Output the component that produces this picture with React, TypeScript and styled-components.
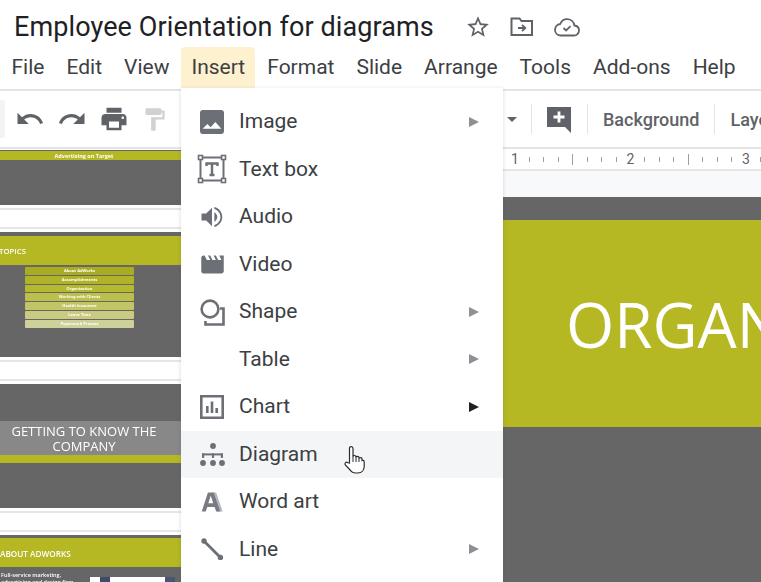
import React from "react";
import styled, { createGlobalStyle } from "styled-components";

const GlobalStyle = createGlobalStyle`
  html, body {
    margin: 0;
    padding: 0;
    background: #fff;
    font-family: Roboto, "Liberation Sans", sans-serif;
  }
`;

const MENU_ITEMS = ["File", "Edit", "View", "Insert", "Format", "Slide", "Arrange", "Tools", "Add-ons", "Help"];

const TOPICS = [
  { label: "About AdWorks", color: "#a9ac22" },
  { label: "Accomplishments", color: "#b0b32a" },
  { label: "Organization", color: "#b5b92e" },
  { label: "Working with Clients", color: "#bcbf4c" },
  { label: "Health Insurance", color: "#c2c566" },
  { label: "Leave Time", color: "#c8cb80" },
  { label: "Paperwork Process", color: "#ced19a" },
];

const Glyph = ({ d, size = 32, color = "#6c7076" }: { d: string; size?: number; color?: string }) => (
  <svg width={size} height={size} viewBox="0 0 24 24" fill={color}>
    <path d={d} />
  </svg>
);

const TextBoxIcon = () => (
  <svg width="32" height="32" viewBox="0 0 32 32" fill="none" stroke="#6c7076">
    <rect x="4.500" y="4.500" width="23" height="23" strokeWidth="2" />
    <g fill="#fff" strokeWidth="1.600">
      <rect x="2.500" y="2.500" width="4" height="4" />
      <rect x="25.500" y="2.500" width="4" height="4" />
      <rect x="2.500" y="25.500" width="4" height="4" />
      <rect x="25.500" y="25.500" width="4" height="4" />
    </g>
    <path d="M10.500 13v-2.500h11V13M16 10.500v11.500M13.500 22h5" strokeWidth="2.400" />
  </svg>
);

const ShapeIcon = () => (
  <svg width="32" height="32" viewBox="0 0 32 32" fill="none" stroke="#6c7076" strokeWidth="2.600">
    <circle cx="14" cy="13" r="8.400" />
    <path d="M24 12.500h3.500v16H9.500V25" />
  </svg>
);

const ChartIcon = () => (
  <svg width="32" height="32" viewBox="0 0 32 32" fill="#6c7076">
    <path d="M4 4h24v24H4zM6.600 6.600v18.800h18.800V6.600z" fillRule="evenodd" />
    <rect x="10" y="15" width="2.600" height="7" />
    <rect x="14.700" y="10.500" width="2.600" height="11.500" />
    <rect x="19.400" y="17" width="2.600" height="5" />
  </svg>
);

const DiagramIcon = () => (
  <svg width="32" height="32" viewBox="0 0 32 32" fill="#6c7076">
    <circle cx="17" cy="8" r="2.900" />
    <rect x="6" y="15.400" width="21" height="2" />
    <rect x="15.900" y="15.400" width="2.200" height="4.500" />
    <rect x="6" y="15.400" width="2.200" height="4.500" />
    <rect x="24.800" y="15.400" width="2.200" height="4.500" />
    <circle cx="7" cy="25" r="2.900" />
    <circle cx="17" cy="25" r="2.900" />
    <circle cx="26" cy="25" r="2.900" />
  </svg>
);

const WordArtIcon = () => (
  <svg width="32" height="32" viewBox="-2.500 -3 39 39">
    <path d="M17 5h5l8 23h-6z" fill="#b4b7bb" />
    <path d="M12 5h7l8 23h-5l-1.800-5.500h-9L9.400 28H4.500zM12.500 18h6L15.500 9z" fill="#787c82" fillRule="evenodd" />
  </svg>
);

const LineIcon = () => (
  <svg width="32" height="32" viewBox="-3 -3 38 38" fill="#6c7076">
    <path d="M7 7l19 19" stroke="#6c7076" strokeWidth="3.400" />
    <circle cx="6.500" cy="6.500" r="3.200" />
    <circle cx="26" cy="26" r="3.200" />
  </svg>
);

const INSERT_ITEMS: { label: string; icon?: React.ReactNode; arrow?: "grey" | "dark"; hovered?: boolean }[] = [
  {
    label: "Image",
    arrow: "grey",
    icon: <Glyph d="M21 19V5c0-1.100-.9-2-2-2H5c-1.100 0-2 .9-2 2v14c0 1.100.9 2 2 2h14c1.100 0 2-.9 2-2zM8.500 13.500l2.500 2.500 3.500-4 4.500 5H5l3.500-3.500z" />,
  },
  { label: "Text box", icon: <TextBoxIcon /> },
  {
    label: "Audio",
    icon: <Glyph size={28} d="M3 9v6h4l5 5V4L7 9H3zm13.500 3c0-1.770-1.020-3.290-2.500-4.030v8.050c1.480-.73 2.500-2.250 2.500-4.020zM14 3.500v1.600c3 .9 5.200 3.600 5.200 6.900s-2.200 6-5.200 6.900v1.600c3.900-.9 6.800-4.400 6.800-8.500S17.900 4.400 14 3.500z" />,
  },
  {
    label: "Video",
    icon: <Glyph size={27} d="M18 4l2 4h-3l-2-4h-2l2 4h-3l-2-4H8l2 4H7L5 4H4c-1.100 0-1.990.9-1.990 2L2 18c0 1.100.9 2 2 2h16c1.100 0 2-.9 2-2V4h-4z" />,
  },
  { label: "Shape", arrow: "grey", icon: <ShapeIcon /> },
  { label: "Table", arrow: "grey" },
  { label: "Chart", arrow: "dark", icon: <ChartIcon /> },
  { label: "Diagram", hovered: true, icon: <DiagramIcon /> },
  { label: "Word art", icon: <WordArtIcon /> },
  { label: "Line", arrow: "grey", icon: <LineIcon /> },
];

// one cell per tick, 8 cells to the inch
const RULER_CELLS = ["1", "", "", "", "|", "", "", "", "2", "", "", "", "|", "", "", "", "3", "", ""];

export default function App() {
  return (
    <Page>
      <GlobalStyle />
      <TitleRow>
        <DocTitle>Employee Orientation for diagrams</DocTitle>
        <TitleIcons>
          <Glyph
            size={26}
            color="#5f6368"
            d="M22 9.240l-7.190-.62L12 2 9.190 8.630 2 9.240l5.460 4.730L5.820 21 12 17.270 18.180 21l-1.630-7.030L22 9.240zM12 15.400l-3.760 2.270 1-4.280-3.320-2.880 4.380-.38L12 6.100l1.710 4.040 4.380.38-3.320 2.880 1 4.280L12 15.400z"
          />
          <svg width="26" height="26" viewBox="0 0 26 26" fill="none" stroke="#5f6368" strokeWidth="2">
            <path d="M2.500 4.500h8l2 2.500h10.500v14H2.500z" />
            <path d="M9 14h7M13 10.800l3.300 3.200-3.300 3.200" strokeWidth="1.800" />
          </svg>
          <svg width="28" height="26" viewBox="0 0 28 26" fill="none" stroke="#5f6368" strokeWidth="1.800">
            <path d="M8 21.500c-3.500 0-6-2.500-6-5.800 0-3 2.300-5.300 5.200-5.700C8.500 7 11 5.200 14 5.200c3.800 0 6.800 2.600 7.400 6.300 2.700.3 4.600 2.400 4.600 5 0 2.800-2.300 5-5 5z" />
            <path d="M10.500 14l2.600 2.500 4.400-4.300" />
          </svg>
        </TitleIcons>
      </TitleRow>

      <MenuBar>
        {MENU_ITEMS.map((item) => (
          <MenuItem key={item} $open={item === "Insert"}>
            {item}
          </MenuItem>
        ))}
      </MenuBar>

      <Toolbar>
        <ToolsLeft>
          <ToolEdge />
          <Glyph size={30} color="#5f6368" d="M12.500 8c-2.650 0-5.050.99-6.900 2.600L2 7v9h9l-3.620-3.620c1.390-1.160 3.160-1.880 5.120-1.880 3.540 0 6.550 2.310 7.600 5.500l2.370-.78C21.080 11.030 17.150 8 12.500 8z" />
          <Glyph size={30} color="#5f6368" d="M18.400 10.600C16.550 8.990 14.150 8 11.500 8c-4.650 0-8.580 3.030-9.960 7.220L3.900 16c1.050-3.190 4.050-5.500 7.600-5.500 1.950 0 3.730.72 5.120 1.880L13 16h9V7l-3.600 3.600z" />
          <Glyph size={30} color="#5f6368" d="M19 8H5c-1.660 0-3 1.340-3 3v6h4v4h12v-4h4v-6c0-1.660-1.340-3-3-3zm-3 11H8v-5h8v5zm3-7c-.55 0-1-.45-1-1s.45-1 1-1 1 .45 1 1-.45 1-1 1zm-1-9H6v4h12V3z" />
          <Glyph size={27} color="#cfd1d3" d="M18 4V3c0-.55-.45-1-1-1H5c-.55 0-1 .45-1 1v4c0 .55.45 1 1 1h12c.55 0 1-.45 1-1V6h1v4H9v11c0 .55.45 1 1 1h2c.55 0 1-.45 1-1v-9h8V4h-3z" />
        </ToolsLeft>
        <ToolsRight>
          <DropCaret />
          <ToolDivider />
          <svg width="30" height="30" viewBox="0 0 30 30">
            <path d="M3 3h24v26l-6-6H3z" fill="#5f6368" />
            <path d="M15 7.500v11M9.500 13h11" stroke="#fff" strokeWidth="2.800" />
          </svg>
          <ToolDivider />
          <ToolLabel>Background</ToolLabel>
          <ToolDivider />
          <ToolLabel>Layout</ToolLabel>
        </ToolsRight>
      </Toolbar>

      <Workspace>
        <Filmstrip>
          <Thumb $height={55} $top={1}>
            <ThumbBand $height={9}>Advertising on Target</ThumbBand>
          </Thumb>
          <ThumbGap />
          <Thumb $height={125}>
            <ThumbDarkStrip $height={4} />
            <ThumbHeading>TOPICS</ThumbHeading>
            <TopicList>
              {TOPICS.map((t) => (
                <Topic key={t.label} $bg={t.color}>
                  {t.label}
                </Topic>
              ))}
            </TopicList>
          </Thumb>
          <ThumbGap />
          <Thumb $height={124}>
            <ThumbDarkStrip $height={37} />
            <ThumbSection>
              GETTING TO KNOW THE
              <br />
              COMPANY
            </ThumbSection>
            <ThumbStripe />
          </Thumb>
          <ThumbGap />
          <Thumb $height={60}>
            <ThumbDarkStrip $height={3} />
            <ThumbHeading $short>ABOUT ADWORKS</ThumbHeading>
            <ThumbBody>
              <ThumbText>
                Full-service marketing,
                <br />
                advertising and design firm
              </ThumbText>
              <ThumbPhoto>
                <PhotoBlock $bg="#3f4a68" />
                <PhotoBlock $bg="#fff" $wide />
                <PhotoBlock $bg="#4a5570" />
              </ThumbPhoto>
            </ThumbBody>
          </Thumb>
        </Filmstrip>

        <Editor>
          <Ruler>
            {RULER_CELLS.map((cell, i) => (
              <RulerCell key={i}>{cell === "" ? <Tick /> : cell === "|" ? <Tick $major /> : cell}</RulerCell>
            ))}
          </Ruler>
          <Canvas>
            <Slide>
              <SlideTitle>ORGANIZATION</SlideTitle>
            </Slide>
          </Canvas>
        </Editor>
      </Workspace>

      <InsertMenu>
        {INSERT_ITEMS.map((item) => (
          <InsertRow key={item.label} $hovered={item.hovered}>
            <InsertIcon>{item.icon}</InsertIcon>
            <InsertLabel>{item.label}</InsertLabel>
            {item.arrow && <SubArrow $dark={item.arrow === "dark"} />}
          </InsertRow>
        ))}
      </InsertMenu>

      <HandCursor width="24" height="30" viewBox="0 0 24 30">
        <path
          d="M6.500 18V3.500c0-2.600 3.500-2.600 3.500 0V12c0-2 3-2 3 0v.8c0-1.800 3-1.800 3 0v1c0-1.700 3-1.700 3 0v1.700c1.200-.5 2.200.2 2.200 1.600v4.400c0 3.800-2.500 6.500-6.400 6.500h-2.100c-2.600 0-4.200-1-5.600-3L2.300 20c-1.300-2 1-3.600 2.600-2.200z"
          fill="#fff"
          stroke="#2b2b2b"
          strokeWidth="1.200"
        />
        <path d="M10 12v5M13 12.500v4.500M16 13.500v3.500" stroke="#2b2b2b" strokeWidth="1" fill="none" />
      </HandCursor>
    </Page>
  );
}

const Page = styled.div`
  position: relative;
  width: 761px;
  height: 582px;
  overflow: hidden;
  background: #fff;
`;

const TitleRow = styled.div`
  display: flex;
  align-items: center;
  height: 47px;
  padding: 6px 0 0 14px;
  box-sizing: border-box;
`;

const DocTitle = styled.div`
  font-size: 27px;
  letter-spacing: 0.1px;
  color: #202124;
  white-space: nowrap;
`;

const TitleIcons = styled.div`
  display: flex;
  align-items: center;
  gap: 18px;
  margin-left: 31px;
`;

const MenuBar = styled.div`
  display: flex;
  gap: 2px;
  height: 42px;
  padding-left: 1.500px;
`;

const MenuItem = styled.div<{ $open?: boolean }>`
  display: flex;
  align-items: center;
  padding: 0 10px 2px;
  font-size: 21px;
  color: #3c4043;
  background: ${({ $open }) => ($open ? "#fef1cf" : "transparent")};
  border-radius: 4px 4px 0 0;
`;

const Toolbar = styled.div`
  display: flex;
  align-items: center;
  height: 60px;
  border-top: 2px solid #e3e4e6;
  border-bottom: 2px solid #e3e4e6;
  box-sizing: border-box;
  white-space: nowrap;
`;

const ToolsLeft = styled.div`
  display: flex;
  align-items: center;
  gap: 12px;
  width: 181px;
  box-sizing: border-box;
  flex-shrink: 0;
`;

const ToolEdge = styled.span`
  width: 5px;
  height: 38px;
  margin-right: -2px;
  border-radius: 0 3px 3px 0;
  background: #f1f3f4;
`;

const ToolsRight = styled.div`
  display: flex;
  align-items: center;
  padding-left: 326px;
`;

const DropCaret = styled.span`
  width: 0;
  height: 0;
  border-left: 5.500px solid transparent;
  border-right: 5.500px solid transparent;
  border-top: 5.500px solid #5f6368;
  margin-right: 14px;
`;

const ToolDivider = styled.span`
  width: 1px;
  height: 30px;
  background: #e3e4e6;
  margin: 0 12px 0 0;

  & + svg {
    margin: 0 13px 0 0;
  }
`;

const ToolLabel = styled.span`
  font-size: 18px;
  font-weight: 500;
  color: #5f6368;
  padding: 0 15px 0 3px;
`;

const Workspace = styled.div`
  display: flex;
  height: 434px;
`;

const Filmstrip = styled.div`
  display: flex;
  flex-direction: column;
  width: 181px;
  flex-shrink: 0;
  overflow: hidden;
  background: #fff;
`;

const Thumb = styled.div<{ $height: number; $top?: number }>`
  flex-shrink: 0;
  height: ${({ $height }) => $height}px;
  margin-top: ${({ $top }) => $top ?? 0}px;
  background: #666667;
  color: #fff;
  font-family: "Open Sans", sans-serif;
  overflow: hidden;
  filter: blur(0.3px);
`;

const ThumbGap = styled.div`
  flex-shrink: 0;
  height: 17px;
  margin: 3px 0;
  border-top: 2px solid #e6e6e8;
  border-bottom: 2px solid #e6e6e8;
`;

const ThumbBand = styled.div<{ $height: number }>`
  height: ${({ $height }) => $height}px;
  line-height: ${({ $height }) => $height + 1}px;
  padding-right: 13px;
  margin-top: 1px;
  background: #b5b823;
  font-size: 5.500px;
  font-weight: 700;
  text-align: center;
`;

const ThumbDarkStrip = styled.div<{ $height: number }>`
  height: ${({ $height }) => $height}px;
  background: #666667;
`;

const ThumbHeading = styled.div<{ $short?: boolean }>`
  height: 29px;
  line-height: 31px;
  background: #b5b823;
  font-size: ${({ $short }) => ($short ? "8.200px" : "7.800px")};
  font-weight: 600;
  text-indent: ${({ $short }) => ($short ? "0" : "-1px")};
`;

const TopicList = styled.div`
  display: flex;
  flex-direction: column;
  gap: 1px;
  width: 109px;
  margin: 2px 0 0 25px;
`;

const Topic = styled.div<{ $bg: string }>`
  height: 7.800px;
  line-height: 7.800px;
  border-radius: 1px;
  background: ${({ $bg }) => $bg};
  font-size: 4px;
  font-weight: 700;
  text-align: center;
`;

const ThumbSection = styled.div`
  height: 34px;
  padding: 3px 13px 0 0;
  box-sizing: border-box;
  background: #888889;
  font-size: 13px;
  line-height: 14.500px;
  text-align: center;
`;

const ThumbStripe = styled.div`
  height: 8px;
  background: #b5b823;
`;

const ThumbBody = styled.div`
  display: flex;
  align-items: flex-start;
`;

const ThumbText = styled.div`
  width: 90px;
  flex-shrink: 0;
  padding: 5px 0 0 1px;
  box-sizing: border-box;
  font-size: 5.500px;
  line-height: 7px;
  font-weight: 600;
  white-space: nowrap;
  overflow: hidden;
`;

const ThumbPhoto = styled.div`
  display: flex;
  width: 85px;
  height: 10px;
  margin-top: 10px;
  background: #fff;
`;

const PhotoBlock = styled.div<{ $bg: string; $wide?: boolean }>`
  flex: ${({ $wide }) => ($wide ? "1" : "0 0 10px")};
  background: ${({ $bg }) => $bg};

  &:first-child {
    margin-left: 10px;
  }
`;

const Editor = styled.div`
  display: flex;
  flex-direction: column;
  flex: 1;
  min-width: 0;
`;

const Ruler = styled.div`
  display: flex;
  align-items: center;
  flex-shrink: 0;
  height: 22px;
  padding-left: 326.800px;
  border-bottom: 2px solid #e3e4e6;
  box-sizing: border-box;
  overflow: hidden;
`;

const RulerCell = styled.div`
  display: flex;
  align-items: center;
  justify-content: center;
  flex: 0 0 14.440px;
  font-size: 14px;
  color: #5f6368;
`;

const Tick = styled.span<{ $major?: boolean }>`
  width: 1px;
  height: ${({ $major }) => ($major ? 11 : 5)}px;
  background: #9aa0a6;
`;

const Canvas = styled.div`
  flex: 1;
  padding-top: 26px;
  background: #f8f9fa;
  min-height: 0;
`;

const Slide = styled.div`
  height: 100%;
  padding-top: 23px;
  box-sizing: border-box;
  background: #666667;
  overflow: hidden;
`;

const SlideTitle = styled.div`
  display: flex;
  align-items: center;
  height: 207px;
  padding-left: 385px;
  background: #b5b823;
  color: #fff;
  font-family: "Open Sans", sans-serif;
  font-size: 62px;
  white-space: nowrap;
  overflow: hidden;
`;

const InsertMenu = styled.div`
  position: absolute;
  top: 88px;
  left: 181px;
  width: 322px;
  height: 494px;
  padding-top: 10px;
  box-sizing: border-box;
  background: #fff;
  box-shadow: 0 1px 4px rgba(60, 64, 67, 0.2);
`;

const InsertRow = styled.div<{ $hovered?: boolean }>`
  display: flex;
  align-items: center;
  height: 47.500px;
  padding: 0 24px 0 15px;
  background: ${({ $hovered }) => ($hovered ? "#f4f5f7" : "transparent")};
`;

const InsertIcon = styled.div`
  display: flex;
  align-items: center;
  justify-content: center;
  flex: 0 0 32px;
  height: 32px;
`;

const InsertLabel = styled.div`
  flex: 1;
  margin-left: 11px;
  padding-bottom: 1px;
  font-size: 21px;
  color: #3c4043;
`;

const SubArrow = styled.span<{ $dark?: boolean }>`
  width: 0;
  height: 0;
  border-top: 5px solid transparent;
  border-bottom: 5px solid transparent;
  border-left: 10px solid ${({ $dark }) => ($dark ? "#202124" : "#8d9196")};
`;

const HandCursor = styled.svg`
  position: absolute;
  left: 343px;
  top: 445px;
`;
